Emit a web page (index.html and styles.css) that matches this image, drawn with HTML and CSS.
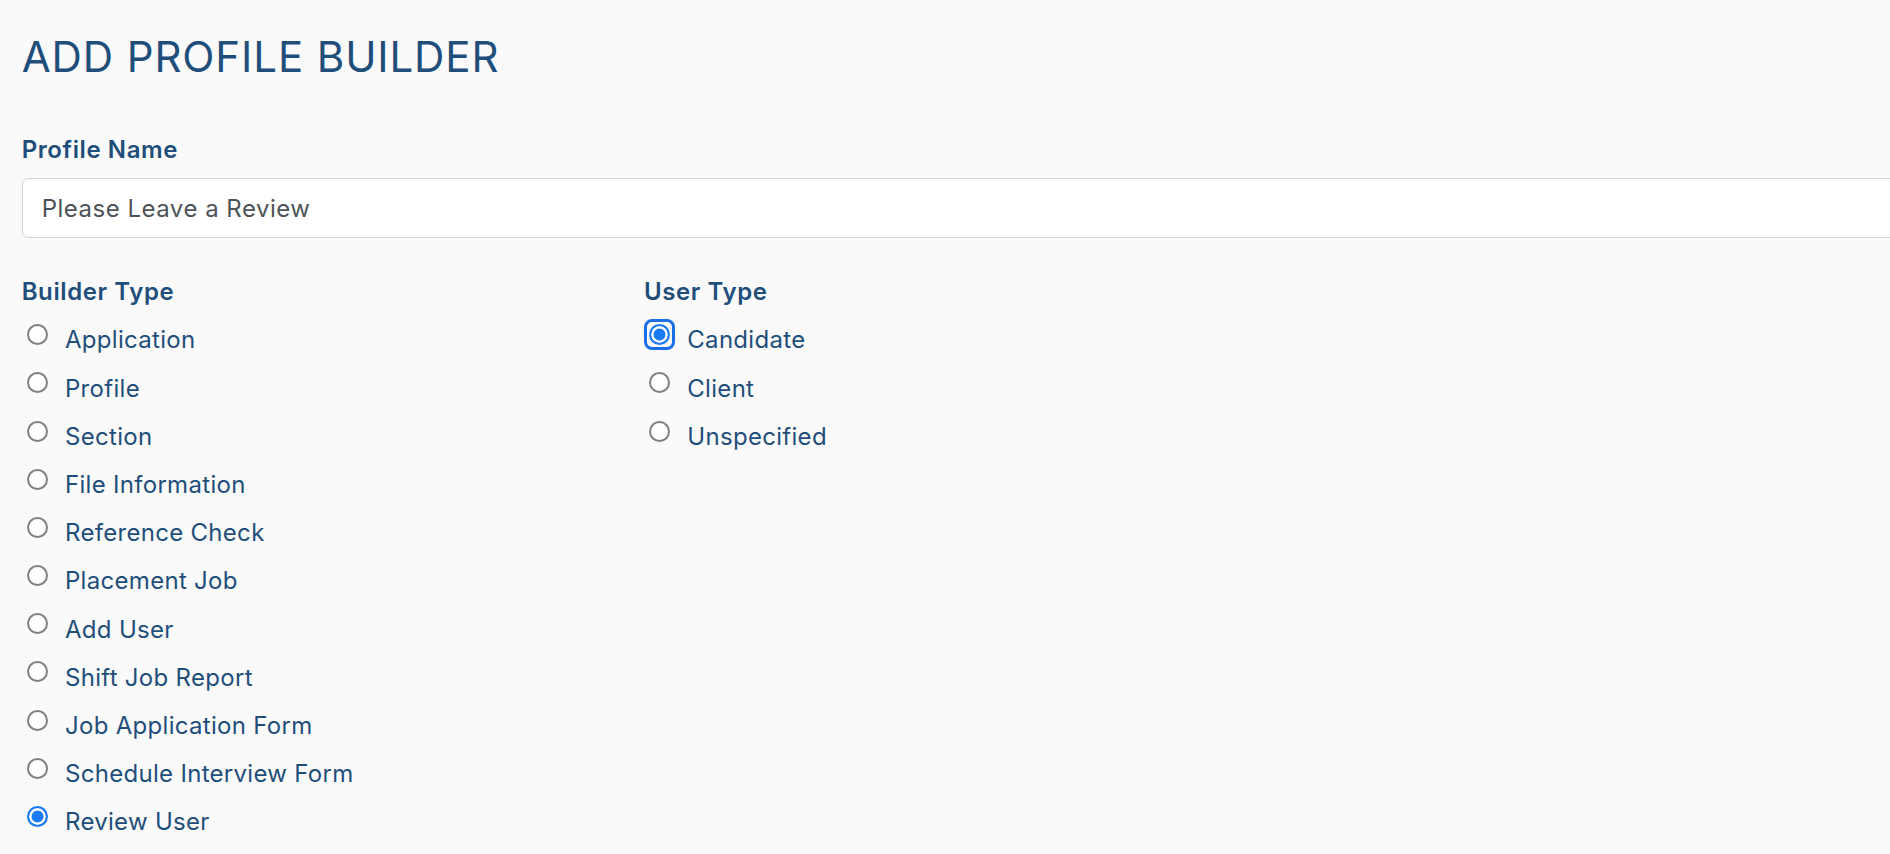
FILE: index.html
```html
<!DOCTYPE html>
<html lang="en">
<head>
<meta charset="utf-8">
<title>Add Profile Builder</title>
<link rel="stylesheet" href="styles.css">
</head>
<body>
<main class="page">
  <h1 class="title">ADD PROFILE BUILDER</h1>

  <div class="field">
    <label class="field-label" for="profile-name">Profile Name</label>
    <input class="text-input" id="profile-name" type="text" value="Please Leave a Review">
  </div>

  <div class="groups">
    <div class="group">
      <div class="field-label">Builder Type</div>
      <label class="option"><input class="radio" type="radio" name="builder"><span>Application</span></label>
      <label class="option"><input class="radio" type="radio" name="builder"><span>Profile</span></label>
      <label class="option"><input class="radio" type="radio" name="builder"><span>Section</span></label>
      <label class="option"><input class="radio" type="radio" name="builder"><span>File Information</span></label>
      <label class="option"><input class="radio" type="radio" name="builder"><span>Reference Check</span></label>
      <label class="option"><input class="radio" type="radio" name="builder"><span>Placement Job</span></label>
      <label class="option"><input class="radio" type="radio" name="builder"><span>Add User</span></label>
      <label class="option"><input class="radio" type="radio" name="builder"><span>Shift Job Report</span></label>
      <label class="option"><input class="radio" type="radio" name="builder"><span>Job Application Form</span></label>
      <label class="option"><input class="radio" type="radio" name="builder"><span>Schedule Interview Form</span></label>
      <label class="option"><input class="radio" type="radio" name="builder" checked><span>Review User</span></label>
    </div>
    <div class="group">
      <div class="field-label">User Type</div>
      <label class="option"><span class="focus-ring"><input class="radio" type="radio" name="user" checked></span><span>Candidate</span></label>
      <label class="option"><input class="radio" type="radio" name="user"><span>Client</span></label>
      <label class="option"><input class="radio" type="radio" name="user"><span>Unspecified</span></label>
    </div>
  </div>
</main>
</body>
</html>
```

FILE: styles.css
```css
html, body {
  margin: 0;
  padding: 0;
  overflow: hidden;
  background: #fafafa;
}
body {
  font-family: Inter, "Noto Sans", sans-serif;
  color: #1f4e7a;
}
.page {
  padding: 32.2px 0 0 21.7px;
}
.title {
  margin: 0;
  font-size: 42px;
  line-height: 1.2;
  font-weight: 400;
  letter-spacing: 0.9px;
  color: #1f4e7a;
}
.field {
  margin-top: 49.7px;
  display: flex;
  flex-direction: column;
  gap: 10px;
}
.field-label {
  font-size: 24px;
  line-height: 36px;
  font-weight: 600;
  letter-spacing: 0.6px;
  color: #1f4e7a;
}
.text-input {
  box-sizing: border-box;
  width: calc(100% + 30px);
  height: 60px;
  margin: 0;
  padding: 0 19px;
  border: 1px solid #d2d2d7;
  border-radius: 6px;
  background: #fff;
  font-family: inherit;
  font-size: 24px;
  letter-spacing: 0.5px;
  color: #4e535a;
  outline: none;
}
.groups {
  margin-top: 36px;
  display: grid;
  grid-template-columns: 622.3px 1fr;
}
.group {
  display: flex;
  flex-direction: column;
  gap: 12.2px;
}
.option {
  display: flex;
  align-items: flex-start;
  gap: 17px;
  font-size: 24px;
  line-height: 36px;
  letter-spacing: 0.3px;
  color: #1f4e7a;
}
.radio {
  appearance: none;
  -webkit-appearance: none;
  box-sizing: border-box;
  flex: none;
  width: 21px;
  height: 21px;
  margin: 1.7px 0 0 5.3px;
  border: 2px solid #808080;
  border-radius: 50%;
  background: #fff;
}
.radio:checked {
  border-color: #1a7bf2;
  background: #1a7bf2;
  box-shadow: inset 0 0 0 2.5px #fff;
}
.focus-ring {
  display: flex;
  flex: none;
  margin: -3.3px -5px 0 0.3px;
  padding: 2px;
  border: 3px solid #1a6fe6;
  border-radius: 8px;
}
.focus-ring .radio {
  margin: 0;
}
```
